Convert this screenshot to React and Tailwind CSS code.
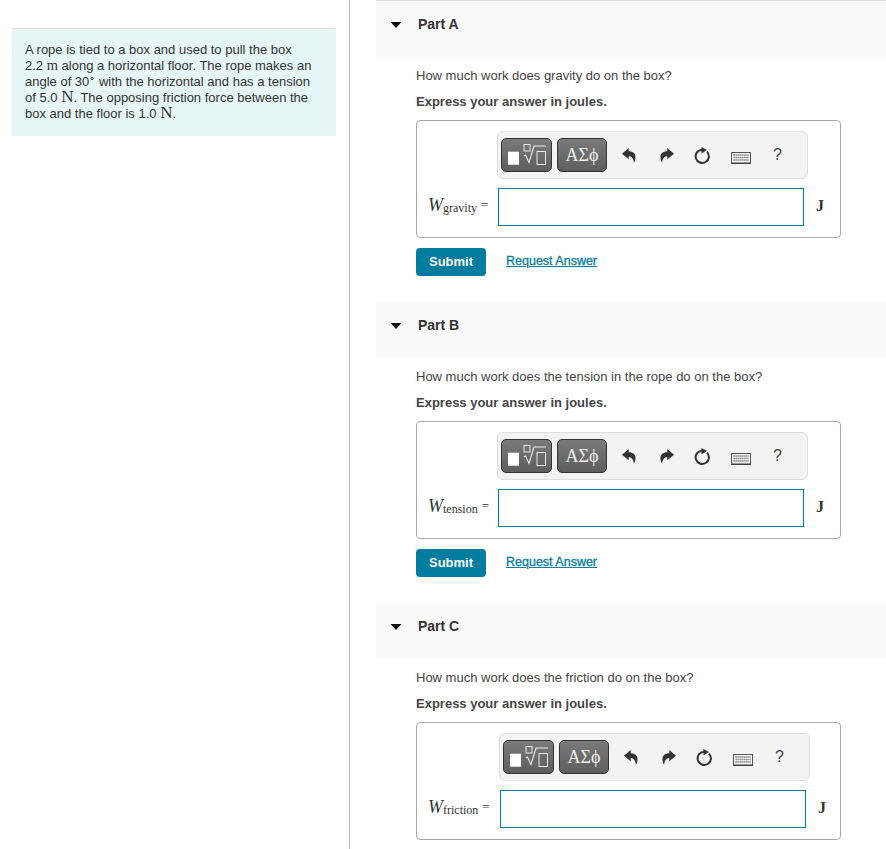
import React from "react";

const Caret = () => (
  <svg width="12" height="6" viewBox="0 0 12 6" className="shrink-0">
    <polygon points="0.5,0 11.5,0 6,6" fill="#111" />
  </svg>
);

const TemplatesIcon = () => (
  <svg width="49" height="32" viewBox="0 0 49 32" className="block">
    <rect x="6" y="12.7" width="11" height="13" fill="#fff" />
    <rect x="22" y="5.5" width="6" height="6.5" fill="none" stroke="#e8e8e8" />
    <path d="M22 17 L23.5 16 L27 23.5 L32 7 H44" fill="none" stroke="#eee" strokeWidth="1.1" />
    <rect x="35" y="12.5" width="8.5" height="13" fill="none" stroke="#e8e8e8" />
  </svg>
);

const UndoIcon = () => (
  <svg width="15" height="15" viewBox="0 0 15 15" className="block">
    <path d="M0 5.7 L6.7 0 V3.3 C11 3.3 14 6 13.5 10 C13.3 12 12.5 14 11.8 14.7 C11.8 11 9.5 8 6.7 8 V11.3 Z" fill="#333" />
  </svg>
);

const RedoIcon = () => (
  <svg width="15" height="15" viewBox="0 0 15 15" className="block">
    <path d="M15 5.7 L8.3 0 V3.3 C4 3.3 1 6 1.5 10 C1.7 12 2.5 14 3.2 14.7 C3.2 11 5.5 8 8.3 8 V11.3 Z" fill="#333" />
  </svg>
);

const ResetIcon = () => (
  <svg width="17" height="17" viewBox="0 0 17 17" className="block">
    <path d="M13 4.6 A6.65 6.65 0 1 1 8 2.65" fill="none" stroke="#333" strokeWidth="2" />
    <path d="M7.5 0 L13 3 L7.5 6.5 Z" fill="#333" />
  </svg>
);

const KeyboardIcon = () => (
  <svg width="20" height="12" viewBox="0 0 20 12" className="block">
    <rect x="0.5" y="0.5" width="19" height="11" fill="#f6f6f6" stroke="#555" />
    <path d="M2.5 3 H17.5 M2.5 5.5 H17.5 M2.5 8 H17.5" stroke="#666" strokeWidth="1.3" strokeDasharray="1.2 0.8" />
    <path d="M1 11 H19" stroke="#333" />
  </svg>
);

const MathButton = ({ children, width }) => (
  <div
    className={`flex items-center justify-center h-[34px] ${width} rounded-[5px] border border-[#333] bg-gradient-to-b from-[#7a7a7a] to-[#5e5e5e]`}
  >
    {children}
  </div>
);

const Toolbar = () => (
  <div className="-ml-px flex items-center w-[311px] h-[48px] bg-[#f3f3f3] border border-[#ddd] rounded-md pl-[3px]">
    <MathButton width="w-[51px]">
      <TemplatesIcon />
    </MathButton>
    <div className="ml-[5px]">
      <MathButton width="w-[50px]">
        <span className="text-[18px] text-[#eee] font-['Liberation_Serif',serif]">ΑΣϕ</span>
      </MathButton>
    </div>
    <div className="ml-[15px]">
      <UndoIcon />
    </div>
    <div className="ml-[22px]">
      <RedoIcon />
    </div>
    <div className="ml-[20px]">
      <ResetIcon />
    </div>
    <div className="ml-[20px] mt-[5px]">
      <KeyboardIcon />
    </div>
    <span className="ml-[22px] text-[16px] text-[#444]">?</span>
  </div>
);

const Part = ({ title, question, sub, labelWidth, first, showSubmit }) => (
  <section>
    <div
      className={`flex items-start bg-[#f9f9f9] pl-[14px] pt-[15px] ${first ? "h-[57px] border-t border-[#ddd]" : "h-[56px]"}`}
    >
      <div className="mt-[6px]">
        <Caret />
      </div>
      <h2 className="ml-4 font-bold text-[14px] text-[#333] leading-4">{title}</h2>
    </div>
    <div className="pl-10 w-[465px]">
      <p className="mt-[11px] leading-4 text-[#444]">{question}</p>
      <p className="mt-[10px] leading-4 font-bold text-[#444]">Express your answer in joules.</p>
      <div className="mt-[10px] h-[118px] border border-[#aaa] rounded pl-[11px] pt-[10px] grid grid-cols-[auto_306px_auto] grid-rows-[48px_38px] gap-y-[9px] content-start justify-start">
        <div />
        <Toolbar />
        <div />
        <div className={`${labelWidth} flex items-center pb-1 text-[#333] font-['Liberation_Serif',serif]`}>
          <span className="italic text-[18px]">W</span>
          <span className="text-[12px] mt-[6px]">{sub}</span>
          <span className="ml-1 text-[13px]">=</span>
        </div>
        <input className="border border-[#007c9e] bg-white outline-none" />
        <span className="self-center pl-3 pb-[2px] font-bold text-[#333] font-['Liberation_Serif',serif] text-[16px]">J</span>
      </div>
      {showSubmit && (
        <div className="mt-[10px] mb-[26px] flex items-center h-7">
          <button className="w-[70px] h-7 bg-[#007c9e] text-white font-bold rounded-sm">Submit</button>
          <a href="#" className="ml-5 mb-[2px] text-[12.5px] [-webkit-text-stroke:0.3px_#007c9e] text-[#007c9e] underline">
            Request Answer
          </a>
        </div>
      )}
    </div>
  </section>
);

export default function App() {
  return (
    <div className="flex h-[849px] overflow-hidden bg-white text-[13px] font-['Liberation_Sans',Arial,sans-serif]">
      <aside className="w-[350px] shrink-0 border-r border-[#bbb] pl-3 pr-[13px] pt-7">
        <div className="h-[108px] bg-[#e6f6f7] border-t border-[#ddd] px-[13px] pt-[13px] leading-4 text-[#333]">
          A rope is tied to a box and used to pull the box{" "}
          <span className="whitespace-nowrap">
            2.2 <span className="font-['Liberation_Serif',serif] text-[14.5px] leading-[0]">m</span>
          </span>{" "}
          along a horizontal floor. The rope makes an angle of 30<sup className="text-[10px]">∘</sup> with the horizontal
          and has a tension of 5.0 <span className="font-['Liberation_Serif',serif] text-[17px] leading-[0]">N</span>. The
          opposing friction force between the box and the floor is 1.0{" "}
          <span className="font-['Liberation_Serif',serif] text-[17px] leading-[0]">N</span>.
        </div>
      </aside>
      <main className="flex-1 pl-[26px]">
        <Part first title="Part A" question="How much work does gravity do on the box?" sub="gravity" labelWidth="w-[70px]" showSubmit />
        <Part title="Part B" question="How much work does the tension in the rope do on the box?" sub="tension" labelWidth="w-[70px]" showSubmit />
        <Part title="Part C" question="How much work does the friction do on the box?" sub="friction" labelWidth="w-[72px]" />
      </main>
    </div>
  );
}
